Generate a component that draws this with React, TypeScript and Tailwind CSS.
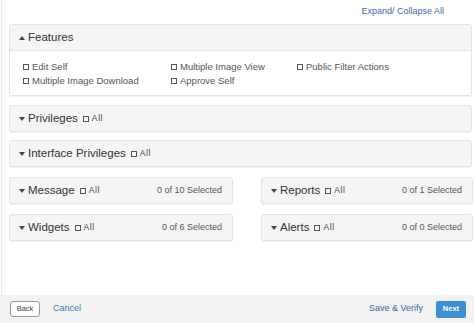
import React from "react";

const features = [
	["Edit Self", "Multiple Image View", "Public Filter Actions"],
	["Multiple Image Download", "Approve Self"],
];

function Caret({ up }: { up?: boolean }) {
	return (
		<svg width="6" height="4" viewBox="0 0 6 4" className="mr-[3px] shrink-0">
			{up ? <polygon points="0,4 6,4 3,0" fill="#444" /> : <polygon points="0,0 6,0 3,4" fill="#444" />}
		</svg>
	);
}

function Box({ small }: { small?: boolean }) {
	return (
		<span
			className={
				small
					? "inline-block w-[6px] h-[6px] border border-[#555] mr-[3px] shrink-0"
					: "inline-block w-[6px] h-[6px] border border-[#555] mr-[3px] shrink-0"
			}
		/>
	);
}

function Panel({ title, count, className }: { title: string; count?: string; className?: string }) {
	return (
		<div
			className={`h-[27px] flex items-center pl-[9px] pr-[10px] bg-[#f5f5f5] border border-[#e4e4e4] rounded-[3px] shadow-[0_1px_1px_rgba(0,0,0,0.06)] ${className ?? ""}`}
		>
			<Caret />
			<span className="text-[11.5px] text-[#333] mr-[5px]">{title}</span>
			<Box small />
			<span className="text-[8.5px] text-[#444] tracking-[0.6px]">All</span>
			{count && <span className="ml-auto text-[9px] text-[#555]">{count}</span>}
		</div>
	);
}

export default function App() {
	return (
		<div className="w-[474px] h-[323px] flex flex-col bg-white font-['Liberation_Sans',Arial,sans-serif] overflow-hidden">
			<div className="flex-1 ml-px border-l border-[#ebebeb] pl-[7px] pr-[2px]">
				<div className="h-[24px] flex items-center justify-end pr-[28px]">
					<span className="text-[9px] text-[#3a6ea5]">Expand/ Collapse All</span>
				</div>

				{/* Features */}
				<div className="border border-[#e4e4e4] rounded-[3px] shadow-[0_1px_1px_rgba(0,0,0,0.06)] mb-[9px]">
					<div className="h-[26px] flex items-center pl-[9px] bg-[#f5f5f5] border-b border-[#e4e4e4]">
						<Caret up />
						<span className="text-[11.5px] text-[#333]">Features</span>
					</div>
					<div className="h-[44px] pt-[9px] pl-[13px] bg-white">
						{features.map((row, i) => (
							<div key={i} className="grid grid-cols-[148px_126px_1fr] h-[14px]">
								{row.map((f) => (
									<div key={f} className="flex items-center">
										<Box />
										<span className="text-[9.5px] text-[#555]">{f}</span>
									</div>
								))}
							</div>
						))}
					</div>
				</div>

				<Panel title="Privileges" className="mb-[8px]" />
				<Panel title="Interface Privileges" className="mb-[10px]" />

				<div className="grid grid-cols-[224px_212px] gap-x-[28px] gap-y-[10px]">
					<Panel title="Message" count="0 of 10 Selected" />
					<Panel title="Reports" count="0 of 1 Selected" />
					<Panel title="Widgets" count="0 of 6 Selected" />
					<Panel title="Alerts" count="0 of 0 Selected" />
				</div>
			</div>

			<div className="h-[28px] bg-[#f2f2f2] flex items-center pl-[10px] pr-[8px]">
				<button className="w-[30px] h-[16px] bg-white border border-[#999] rounded-[3px] text-[7.5px] text-[#444] flex items-center justify-center">
					Back
				</button>
				<span className="ml-[13px] text-[9px] text-[#3d7ab8]">Cancel</span>
				<span className="ml-auto text-[9px] text-[#3a6ea5]">Save &amp; Verify</span>
				<button className="ml-[13px] w-[30px] h-[17px] bg-[#3c8fd0] rounded-[2px] text-[7.5px] font-bold text-white flex items-center justify-center">
					Next
				</button>
			</div>
		</div>
	);
}
